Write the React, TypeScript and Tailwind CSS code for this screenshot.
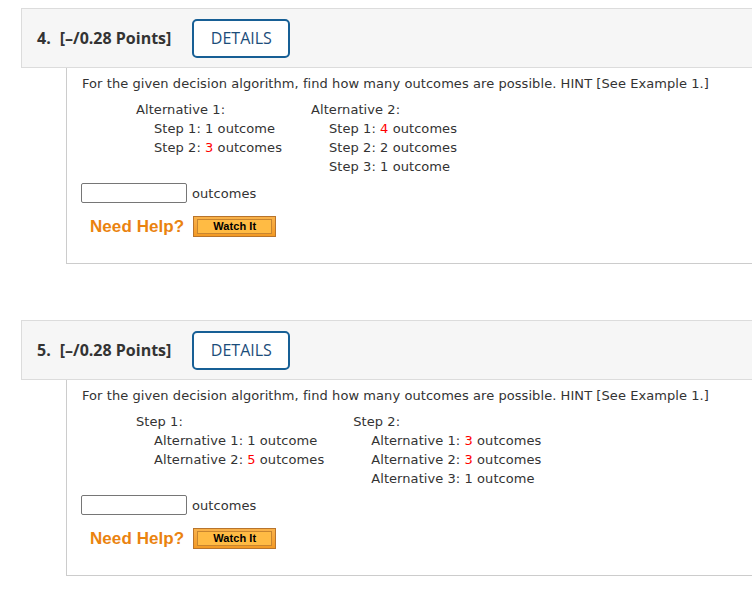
import React from "react";

const R = ({ children }: { children: React.ReactNode }) => (
  <span className="text-[#f00]">{children}</span>
);

type Col = { title: string; lines: React.ReactNode[] };

function Section({ num, cols }: { num: string; cols: Col[] }) {
  return (
    <div>
      <div
        className="flex items-center h-[60px] border border-r-0 border-[#dcdcdc] bg-[#f6f6f6] pl-[15px]"
        style={{ fontFamily: '"Open Sans", sans-serif' }}
      >
        <span className="text-[16px] font-bold text-[#333]">{num}.</span>
        <span className="ml-[9px] text-[16px] font-bold text-[#333]">[–/0.28 Points]</span>
        <button className="ml-[21px] w-[98px] h-[39px] border-2 border-[#175f95] rounded-[5px] bg-white text-[16px] text-[#1b4d7a] flex items-center justify-center">
          DETAILS
        </button>
      </div>
      <div
        className="ml-[45px] border-l border-b border-[#cccccc] pl-[15px] pt-[6px] pb-[26px] text-[13px] leading-[19px] tracking-[0.07px] text-[#333]"
        style={{ fontFamily: '"DejaVu Sans", Verdana, sans-serif' }}
      >
        <p>
          For the given decision algorithm, find how many outcomes are possible. HINT [See Example 1.]
        </p>
        <div className="flex gap-[29px] ml-[54px] mt-[7px]">
          {cols.map((c, i) => (
            <div key={i}>
              <div>{c.title}</div>
              {c.lines.map((l, j) => (
                <div key={j} className="pl-[18px]">
                  {l}
                </div>
              ))}
            </div>
          ))}
        </div>
        <div className="flex items-center mt-[7px] -ml-[1px]">
          <input
            type="text"
            className="w-[106px] h-[20px] border border-[#767676] rounded-[2px] bg-white"
          />
          <span className="ml-[5px]">outcomes</span>
        </div>
        <div className="flex items-center mt-[13px]">
          <span
            className="ml-[8px] text-[17px] font-bold text-[#ea830f]"
            style={{ fontFamily: '"Liberation Sans", Arial, sans-serif' }}
          >
            Need Help?
          </span>
          <div className="ml-[9px] w-[83px] h-[21px] border border-[#b8742c] bg-gradient-to-b from-[#f9b24a] to-[#f39a23] p-[2px] pl-[3px] pr-[3px]">
            <div
              className="h-full border border-[#c8852f] bg-[#ffbb44] flex items-center justify-center text-[11px] font-bold text-black leading-none"
              style={{ fontFamily: '"Liberation Sans", Arial, sans-serif' }}
            >
              Watch It
            </div>
          </div>
        </div>
      </div>
    </div>
  );
}

export default function App() {
  return (
    <div className="w-[752px] h-[591px] bg-white overflow-hidden pt-[8px] pl-[21px] flex flex-col gap-[56px]">
      <Section
        num="4"
        cols={[
          {
            title: "Alternative 1:",
            lines: [
              <>Step 1: 1 outcome</>,
              <>
                Step 2: <R>3</R> outcomes
              </>,
            ],
          },
          {
            title: "Alternative 2:",
            lines: [
              <>
                Step 1: <R>4</R> outcomes
              </>,
              <>Step 2: 2 outcomes</>,
              <>Step 3: 1 outcome</>,
            ],
          },
        ]}
      />
      <Section
        num="5"
        cols={[
          {
            title: "Step 1:",
            lines: [
              <>Alternative 1: 1 outcome</>,
              <>
                Alternative 2: <R>5</R> outcomes
              </>,
            ],
          },
          {
            title: "Step 2:",
            lines: [
              <>
                Alternative 1: <R>3</R> outcomes
              </>,
              <>
                Alternative 2: <R>3</R> outcomes
              </>,
              <>Alternative 3: 1 outcome</>,
            ],
          },
        ]}
      />
    </div>
  );
}
